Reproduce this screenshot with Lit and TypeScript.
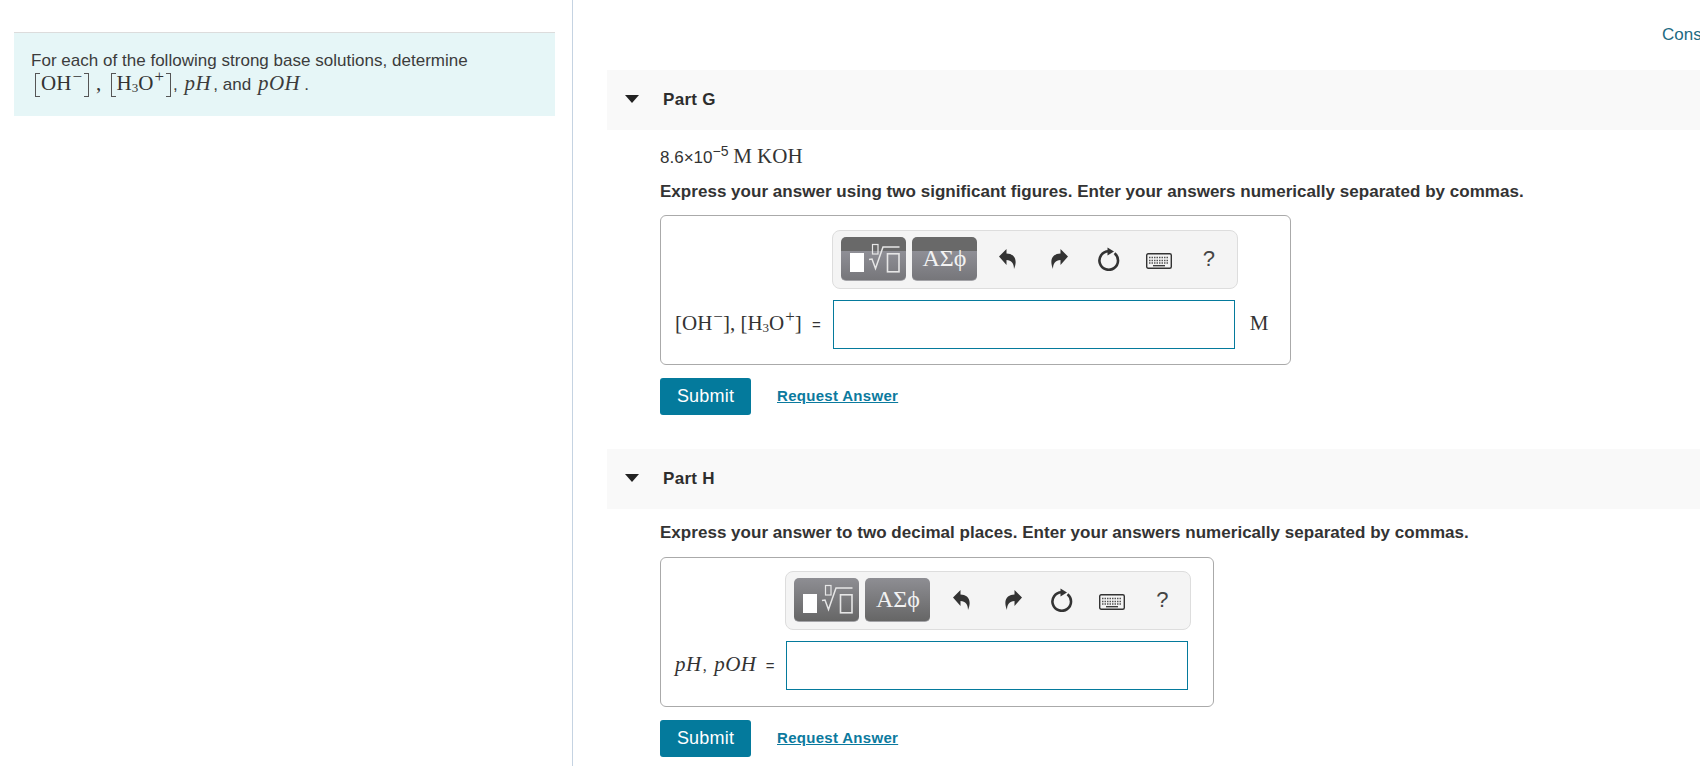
import { LitElement, html, css, nothing } from 'lit';
import type { TemplateResult } from 'lit';
import { customElement, property } from 'lit/decorators.js';
import { classMap } from 'lit/directives/class-map.js';

const mathStyles = css`
  .m {
    font-family: 'Liberation Serif', serif;
    font-size: 21px;
    color: #333;
  }

  i {
    font-family: 'Liberation Serif', serif;
    font-size: 21px;
    letter-spacing: 0.5px;
  }

  .m sup {
    font-size: 17px;
    line-height: 0;
    margin-left: 1px;
  }

  .m sub {
    font-size: 13px;
    line-height: 0;
    vertical-align: -2px;
  }

  .eq {
    font-family: 'Liberation Sans', sans-serif;
    font-size: 15px;
    margin-left: 5px;
  }

  .fine {
    font-style: normal;
    font-size: 16px;
    margin: 0 7px 0 1px;
  }
`;

@customElement('answer-box')
export class AnswerBox extends LitElement {
  @property({ attribute: false }) label: TemplateResult | null = null;
  @property() unit = '';
  @property({ type: Boolean }) banded = false;

  static styles = [
    mathStyles,
    css`
      :host {
        display: block;
        width: fit-content;
      }

      .box {
        display: grid;
        grid-template-columns: auto 402px auto;
        align-items: center;
        border: 1px solid #aaa;
        border-radius: 6px;
        padding: var(--box-top, 14px) var(--box-right, 21px) var(--box-bottom, 15px) 14px;
        color: #333;
      }

      .tools {
        grid-column: 2 / 4;
        grid-row: 1;
        box-sizing: border-box;
        width: 406px;
        height: 59px;
        margin: 0 0 11px -1px;
        padding: 6px 0 0 8px;
        display: flex;
        background: #f4f4f4;
        border: 1px solid #ddd;
        border-radius: 8px;
      }

      .tpl {
        width: 65px;
        height: 44px;
        margin-right: 6px;
        border-radius: 5px;
        box-sizing: border-box;
        border-bottom: 1px solid #a4a4a8;
        background: linear-gradient(#8e8e93, #666);
        color: #f2f2f2;
        font: 24px 'Liberation Serif', serif;
        text-align: center;
        line-height: 42px;
      }

      .tpl.banded {
        background: linear-gradient(#696969 0 14px, #8f8f96 14px, #76767a 100%);
      }

      .tpl svg {
        display: block;
      }

      .cell {
        flex: 0 0 50px;
        height: 44px;
        display: flex;
        align-items: center;
        justify-content: center;
        color: #333;
      }

      .tpl + .cell {
        margin-left: 1px;
      }

      .kbd {
        padding-top: 4px;
        box-sizing: border-box;
      }

      .qm {
        font: 22px 'Liberation Sans', sans-serif;
        color: #444;
      }

      .label {
        grid-column: 1;
        grid-row: 2;
        padding: 0 12px 3px 0;
        white-space: nowrap;
        font: 15px 'Liberation Sans', sans-serif;
      }

      .input {
        grid-column: 2;
        grid-row: 2;
        box-sizing: border-box;
        height: 49px;
        border: 1px solid #047a9c;
        background: #fff;
      }

      .unit {
        grid-column: 3;
        grid-row: 2;
        padding: 0 0 3px 15px;
        font: 21px 'Liberation Serif', serif;
      }
    `,
  ];

  render() {
    return html`
      <div class="box">
        <div class="tools">
          <div class=${classMap({ tpl: true, banded: this.banded })}>
            <svg width="65" height="44" viewBox="0 0 65 44" fill="none" stroke="#e6e6e6" stroke-width="1.2">
              <rect x="9" y="16" width="14" height="19" fill="#fff" stroke="none" />
              <rect x="31.500" y="7.500" width="5.500" height="9.500" />
              <path d="M28 22.500l3-.5 3.500 9.500L42 10h16.500" stroke-width="1.500" />
              <rect x="46.500" y="16.800" width="11.500" height="18" stroke-width="1.600" />
            </svg>
          </div>
          <div class=${classMap({ tpl: true, banded: this.banded })}>ΑΣϕ</div>
          <div class="cell">
            <svg width="19" height="20" viewBox="0 0 19 20" fill="currentColor">
              <path d="M0 7.500 7.500 0v4.500c6.500 0 12 5 7.500 15.500 0-5.500-2.500-9-7.500-9v5z" />
            </svg>
          </div>
          <div class="cell">
            <svg width="19" height="20" viewBox="0 0 19 20" fill="currentColor">
              <path d="M19 7.500 11.500 0v4.500C5 4.500-.5 9.500 4 20c0-5.500 2.500-9 7.500-9v5z" />
            </svg>
          </div>
          <div class="cell">
            <svg width="22" height="24" viewBox="0 0 22 24" fill="none" stroke="currentColor" stroke-width="2.600">
              <path d="M10.500 4.200a9.300 9.300 0 1 0 6 2" />
              <path d="M9.500.5l6.500 4-6.500 4z" fill="currentColor" stroke="none" />
            </svg>
          </div>
          <div class="cell kbd">
            <svg width="26" height="16" viewBox="0 0 26 16">
              <rect x=".7" y=".7" width="24.600" height="14.600" rx="1.500" fill="#f4f4f4" stroke="#333" stroke-width="1.400" />
              <path d="M3 4.500h20M3 7.500h20M3 10h20" stroke="#555" stroke-width="1.300" stroke-dasharray="1.500 1" />
              <path d="M7 12.700h12" stroke="#333" stroke-width="1.300" />
            </svg>
          </div>
          <div class="cell qm">?</div>
        </div>
        <div class="label">${this.label}</div>
        <div class="input"></div>
        ${this.unit ? html`<div class="unit">${this.unit}</div>` : nothing}
      </div>
    `;
  }
}

@customElement('app-root')
export class AppRoot extends LitElement {
  static styles = [
    mathStyles,
    css`
      :host {
        display: block;
        height: 766px;
        overflow: hidden;
        background: #fff;
        color: #333;
        font-family: 'Liberation Sans', Arial, sans-serif;
        font-size: 17px;
      }

      .page {
        display: flex;
        height: 766px;
      }

      .left {
        flex: 0 0 573px;
        box-sizing: border-box;
        padding: 32px 17px 0 14px;
        border-right: 1px solid #c5d3e2;
      }

      .intro {
        box-sizing: border-box;
        height: 84px;
        padding: 17px 17px 0;
        background: #e6f6f7;
        border-top: 1px solid #dcdcdc;
        color: #3c3c3c;
        line-height: 22px;
        letter-spacing: 0.02px;
      }

      .right {
        flex: 1;
        min-width: 0;
        padding-left: 34px;
      }

      .top {
        height: 70px;
        box-sizing: border-box;
        padding: 25px 0 0 1055px;
        white-space: nowrap;
        color: #1d6a82;
      }

      .head {
        height: 60px;
        display: flex;
        align-items: center;
        background: #f9f9f9;
        font-weight: 700;
        letter-spacing: 0.3px;
        color: #2d2d2d;
      }

      .tri {
        width: 0;
        height: 0;
        margin: -2px 24px 0 18px;
        border-left: 7px solid transparent;
        border-right: 7px solid transparent;
        border-top: 8px solid #222;
      }

      .body {
        padding-left: 53px;
      }

      .given {
        height: 50px;
        padding-top: 14px;
        box-sizing: border-box;
        white-space: nowrap;
      }

      .given sup {
        font-size: 14px;
        line-height: 0;
      }

      .hint {
        height: 24px;
        line-height: 24px;
        font-weight: 700;
        letter-spacing: 0.03px;
        white-space: nowrap;
      }

      .g .hint {
        margin-bottom: 11px;
      }

      .h .hint {
        margin: 12px 0;
      }

      .h answer-box {
        --box-top: 13px;
        --box-right: 22px;
        --box-bottom: 16px;
      }

      .actions {
        display: flex;
        align-items: center;
        margin-top: 13px;
        height: 37px;
        margin-bottom: 34px;
      }

      .submit {
        width: 91px;
        height: 37px;
        line-height: 36px;
        background: #047a9c;
        border-radius: 3px;
        color: #fff;
        font-size: 18px;
        letter-spacing: 0.2px;
        text-align: center;
      }

      .req {
        margin: -2px 0 0 26px;
        font-size: 15px;
        font-weight: 700;
        letter-spacing: 0.3px;
        color: #0b7a9e;
        text-decoration: underline;
      }

      .br {
        display: inline-block;
        vertical-align: -7px;
        width: 5px;
        height: 24px;
        box-sizing: border-box;
        border: 1px solid #555;
        border-right: 0;
        margin: 0 1px 0 4px;
      }

      .br.r {
        border: 1px solid #555;
        border-left: 0;
        margin: 0 2px;
      }

      .br.far {
        margin-right: 7px;
      }

      .lead {
        margin-right: 2px;
      }

      .and {
        margin: 0 2px;
      }

      .dot {
        margin-left: 4px;
      }
    `,
  ];

  render() {
    return html`
      <div class="page">
        <div class="left">
          <div class="intro">
            For each of the following strong base solutions, determine<br />
            <span class="m"><span class="br"></span>OH<sup>−</sup><span class="br r far"></span>, <span class="br"></span>H<sub>3</sub>O<sup>+</sup><span class="br r"></span></span><span class="lead">,</span>
            <i>pH</i><span class="and">, and </span><i>pOH</i><span class="dot">.</span>
          </div>
        </div>
        <div class="right">
          <div class="top">Constants | Periodic Table</div>

          <section class="g">
            <div class="head"><span class="tri"></span>Part G</div>
            <div class="body">
              <div class="given">8.6×10<sup>−5</sup> <span class="m">M KOH</span></div>
              <div class="hint">Express your answer using two significant figures. Enter your answers numerically separated by commas.</div>
              <answer-box
                banded
                unit="M"
                .label=${html`<span class="m">[OH<sup>−</sup>], [H<sub>3</sub>O<sup>+</sup>] <span class="eq">=</span></span>`}
              ></answer-box>
              <div class="actions">
                <div class="submit">Submit</div>
                <a class="req">Request Answer</a>
              </div>
            </div>
          </section>

          <section class="h">
            <div class="head"><span class="tri"></span>Part H</div>
            <div class="body">
              <div class="hint">Express your answer to two decimal places. Enter your answers numerically separated by commas.</div>
              <answer-box
                .label=${html`<i>pH</i><i class="fine">,</i><i>pOH</i> <span class="eq">=</span>`}
              ></answer-box>
              <div class="actions">
                <div class="submit">Submit</div>
                <a class="req">Request Answer</a>
              </div>
            </div>
          </section>
        </div>
      </div>
    `;
  }
}

declare global {
  interface HTMLElementTagNameMap {
    'app-root': AppRoot;
    'answer-box': AnswerBox;
  }
}
